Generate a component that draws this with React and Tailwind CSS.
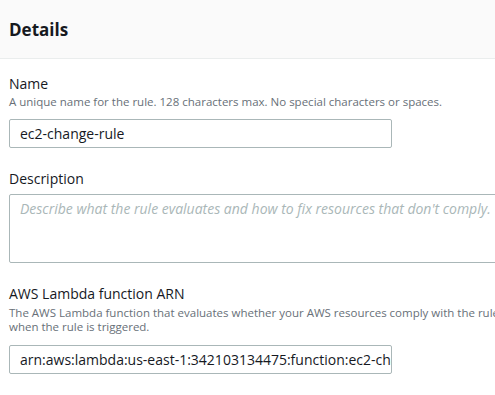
export default function App() {
  return (
    <div className="w-[495px] h-[395px] overflow-hidden bg-white" style={{ fontFamily: '"Open Sans", sans-serif' }}>
      <div className="h-[59px] bg-[#fafafa] border-b border-[#eaeded] flex items-center px-[9px]">
        <h2 className="text-[17px] font-bold text-[#16191f] leading-none">Details</h2>
      </div>
      <div className="px-[9px] pt-[15px]">
        <div className="text-[14px] text-[#16191f] leading-[20px]">Name</div>
        <div className="mt-[1px] text-[11.5px] text-[#687078] leading-[14px]">A unique name for the rule. 128 characters max. No special characters or spaces.</div>
        <div className="mt-[10px] w-[383px] h-[29px] border border-[#aab7b8] rounded-[2px] flex items-center px-[10px] text-[14px] text-[#16191f]">ec2-change-rule</div>
        <div className="mt-[21px] text-[14px] text-[#16191f] leading-[20px]">Description</div>
        <div className="mt-[5px] w-[520px] h-[69px] border border-[#aab7b8] rounded-[2px] px-[10px] pt-[3px] text-[14px] italic text-[#aab7b8] whitespace-nowrap">Describe what the rule evaluates and how to fix resources that don't comply.</div>
        <div className="mt-[21px] text-[14px] text-[#16191f] leading-[20px]">AWS Lambda function ARN</div>
        <div className="mt-[2px] text-[11.5px] text-[#687078] leading-[14px] w-[500px]">The AWS Lambda function that evaluates whether your AWS resources comply with the rule when the rule is triggered.</div>
        <div className="mt-[11px] w-[383px] h-[29px] border border-[#aab7b8] rounded-[2px] flex items-center px-[10px] text-[14px] text-[#16191f] overflow-hidden whitespace-nowrap">arn:aws:lambda:us-east-1:342103134475:function:ec2-change-rule</div>
      </div>
    </div>
  );
}
